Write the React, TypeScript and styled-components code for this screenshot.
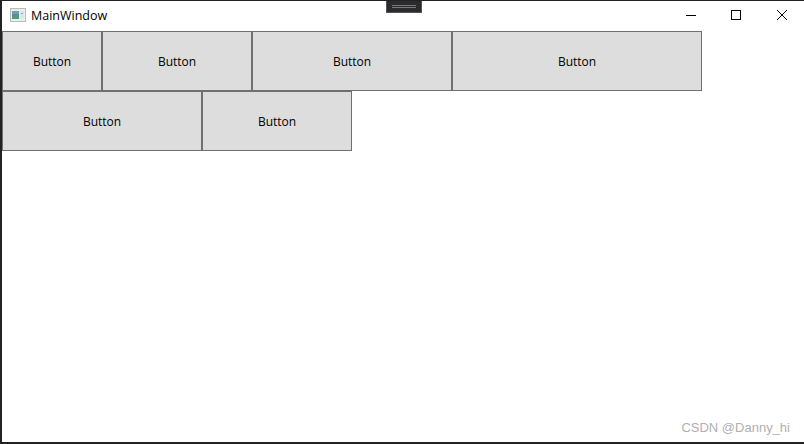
import React from 'react';
import styled, { createGlobalStyle } from 'styled-components';

const GlobalStyle = createGlobalStyle`
  html, body {
    margin: 0;
    padding: 0;
    background: #fff;
  }
`;

const Window = styled.div`
  position: relative;
  box-sizing: border-box;
  width: 804px;
  height: 444px;
  display: flex;
  flex-direction: column;
  overflow: hidden;
  background: #fff;
  border-top: 1px solid #222;
  border-left: 2px solid #222;
  border-bottom: 2px solid #222;
  font-family: 'Open Sans', 'Noto Sans', sans-serif;
`;

const TitleBar = styled.div`
  box-sizing: border-box;
  height: 30px;
  display: flex;
  align-items: center;
  padding: 0 0 2px 8px;
  gap: 5px;
`;

const Title = styled.span`
  font-size: 12.5px;
  color: #000;
`;

const WindowControls = styled.div`
  margin-left: auto;
  margin-right: -1px;
  display: flex;
  height: 100%;
`;

const ControlButton = styled.div<{ $width: number }>`
  width: ${(p) => p.$width}px;
  height: 100%;
  display: flex;
  align-items: center;
  justify-content: center;
`;

const WrapPanel = styled.div`
  display: flex;
  flex-wrap: wrap;
  align-content: flex-start;
  flex: 1;
`;

const WrapButton = styled.div<{ $width: number }>`
  box-sizing: border-box;
  width: ${(p) => p.$width}px;
  height: 60px;
  display: flex;
  align-items: center;
  justify-content: center;
  background: #dddddd;
  border: 1px solid #707070;
  font-size: 12px;
  color: #000;
`;

const Grip = styled.div`
  position: absolute;
  top: -1px;
  left: 384px;
  box-sizing: border-box;
  width: 36px;
  height: 13px;
  background: #2b2b2d;
  border: 1px solid #55565a;
  border-top: none;
  display: flex;
  flex-direction: column;
  align-items: center;
  justify-content: center;
  gap: 1px;
`;

const GripLine = styled.span`
  display: block;
  width: 24px;
  height: 1px;
  background: #77787c;
`;

const Watermark = styled.div`
  position: absolute;
  right: 14px;
  bottom: 7px;
  font-family: 'Liberation Sans', sans-serif;
  font-size: 13px;
  color: #b0b0b0;
`;

const AppIcon = () => (
  <svg width="16" height="14" viewBox="0 0 16 14">
    <rect x="0.5" y="0.5" width="15" height="13" fill="#eceeee" stroke="#b9bcbe" />
    <rect x="2" y="3" width="7" height="8" fill="#4f9a84" />
    <rect x="2" y="3" width="7" height="3" fill="#6f9fb8" />
    <rect x="10" y="3" width="4" height="8" fill="#dfe5e6" />
    <rect x="11" y="5" width="2" height="1" fill="#9aa3a6" />
  </svg>
);

const MinimizeIcon = () => (
  <svg width="10" height="10" viewBox="0 0 10 10">
    <path d="M0 5.5H10" stroke="#000" strokeWidth="1" />
  </svg>
);

const MaximizeIcon = () => (
  <svg width="10" height="10" viewBox="0 0 10 10">
    <rect x="0.5" y="0.5" width="9" height="9" fill="none" stroke="#000" strokeWidth="1" />
  </svg>
);

const CloseIcon = () => (
  <svg width="10" height="10" viewBox="0 0 10 10">
    <path d="M0 0L10 10M10 0L0 10" stroke="#000" strokeWidth="1" />
  </svg>
);

const buttonWidths = [100, 150, 200, 250, 200, 150];

const App: React.FC = () => {
  return (
    <Window>
      <GlobalStyle />
      <TitleBar>
        <AppIcon />
        <Title>MainWindow</Title>
        <WindowControls>
          <ControlButton $width={44}>
            <MinimizeIcon />
          </ControlButton>
          <ControlButton $width={46}>
            <MaximizeIcon />
          </ControlButton>
          <ControlButton $width={46}>
            <CloseIcon />
          </ControlButton>
        </WindowControls>
      </TitleBar>
      <WrapPanel>
        {buttonWidths.map((width, i) => (
          <WrapButton key={i} $width={width}>
            Button
          </WrapButton>
        ))}
      </WrapPanel>
      <Grip>
        <GripLine />
        <GripLine />
      </Grip>
      <Watermark>CSDN @Danny_hi</Watermark>
    </Window>
  );
};

export default App;
